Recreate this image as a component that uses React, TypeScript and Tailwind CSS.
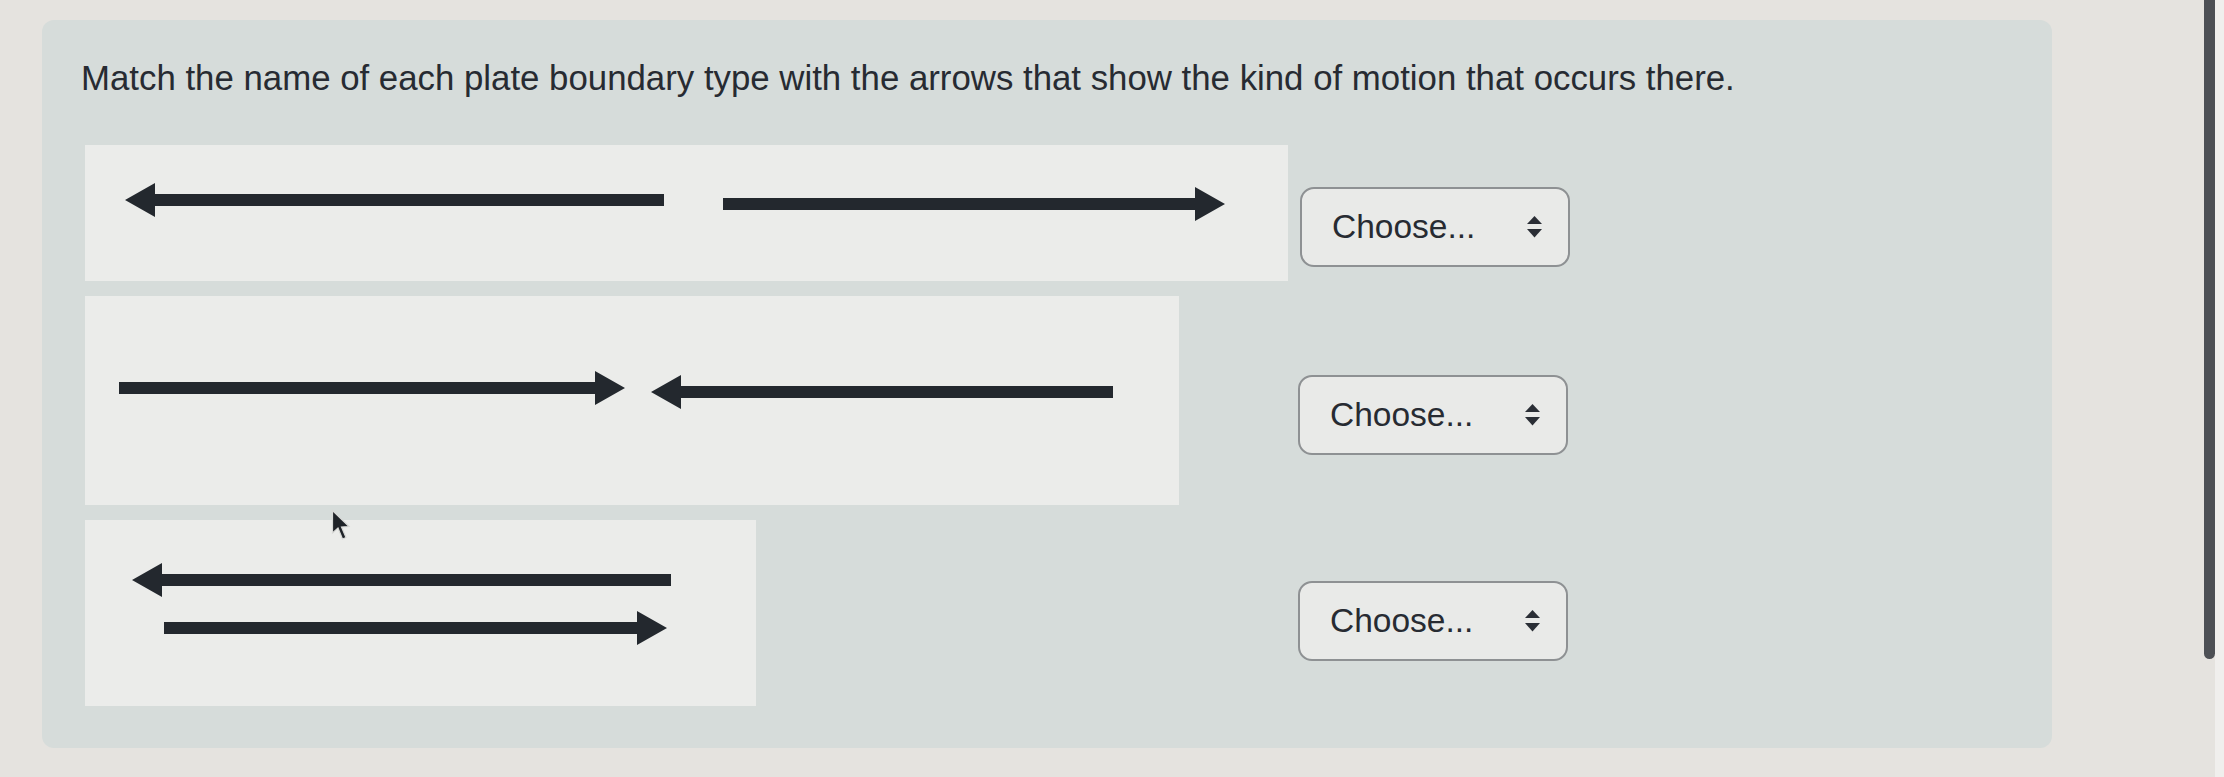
import React from 'react'

type Dir = 'left' | 'right'

function Arrow({ dir, length }: { dir: Dir; length: number }) {
  const h = 34
  const mid = h / 2
  const head = 36
  const shaft = 12
  const d =
    dir === 'right'
      ? `M0 ${mid - shaft / 2} H${length - head + 6} V0 L${length} ${mid} L${length - head + 6} ${h} V${mid + shaft / 2} H0 Z`
      : `M${length} ${mid - shaft / 2} H${head - 6} V0 L0 ${mid} L${head - 6} ${h} V${mid + shaft / 2} H${length} Z`
  return (
    <svg width={length} height={h} viewBox={`0 0 ${length} ${h}`} className="block shrink-0">
      <path d={d} fill="#23282e" />
    </svg>
  )
}

function SortIcon() {
  return (
    <svg width="17" height="22" viewBox="0 0 17 22" className="block">
      <path d="M8.5 0 L16 8 H1 Z" fill="#2a2e35" />
      <path d="M1 13 H16 L8.5 21.5 Z" fill="#2a2e35" />
    </svg>
  )
}

function ChooseSelect() {
  return (
    <div className="flex h-[80px] w-[270px] shrink-0 items-center justify-between rounded-[14px] border-2 border-[#8e9193] bg-[#e9eae8] pl-[30px] pr-[25px]">
      <span className="text-[33.5px] leading-none text-[#272b32]">Choose...</span>
      <SortIcon />
    </div>
  )
}

export default function App() {
  return (
    <div
      className="relative h-[777px] w-[2224px] overflow-hidden bg-[#e5e3df]"
      style={{ fontFamily: '"Liberation Sans", Arial, sans-serif' }}
    >
      <div className="ml-[42px] mt-[20px] h-[728px] w-[2010px] rounded-[12px] bg-[#d6dcda] pl-[39px] pt-[40px]">
        <p className="text-[34.8px] leading-[35px] text-[#272b32]">
          Match the name of each plate boundary type with the arrows that show the kind of motion that occurs there.
        </p>

        <div className="mt-[50px] flex flex-col gap-[15px] pl-[4px]">
          {/* divergent */}
          <div className="flex items-center">
            <div className="flex h-[136px] w-[1203px] shrink-0 items-start gap-[59px] bg-[#ebecea] pl-[40px] pt-[38px]">
              <Arrow dir="left" length={539} />
              <div className="pt-[4px]">
                <Arrow dir="right" length={502} />
              </div>
            </div>
            <div className="ml-[12px] mt-[28px]">
              <ChooseSelect />
            </div>
          </div>

          {/* convergent */}
          <div className="flex items-center">
            <div className="flex h-[209px] w-[1094px] shrink-0 items-center gap-[26px] bg-[#ebecea] pl-[34px] pb-[18px]">
              <div className="pb-[8px]">
                <Arrow dir="right" length={506} />
              </div>
              <Arrow dir="left" length={462} />
            </div>
            <div className="ml-[119px] mt-[28px]">
              <ChooseSelect />
            </div>
          </div>

          {/* transform */}
          <div className="flex items-center">
            <div className="flex h-[186px] w-[671px] shrink-0 flex-col items-start gap-[14px] bg-[#ebecea] pl-[47px] pt-[43px]">
              <Arrow dir="left" length={539} />
              <div className="pl-[32px]">
                <Arrow dir="right" length={503} />
              </div>
            </div>
            <div className="ml-[542px] mt-[16px]">
              <ChooseSelect />
            </div>
          </div>
        </div>
      </div>

      {/* mouse pointer */}
      <svg width="20" height="32" viewBox="0 0 20 32" className="absolute left-[331px] top-[509px]">
        <path d="M1.5 1.5 L1.5 24 L7 19 L11.5 30 L15 28.5 L10.5 18 L18 17.5 Z" fill="#1f2328" stroke="#d8d9d7" strokeWidth="1.2" />
      </svg>

      {/* scrollbar */}
      <div className="absolute right-[9px] top-0 h-[659px] w-[11px] rounded-b-full bg-[#4d5055]" />
      <div className="absolute right-0 top-0 h-full w-[9px] bg-[#f0efed]" />
    </div>
  )
}
